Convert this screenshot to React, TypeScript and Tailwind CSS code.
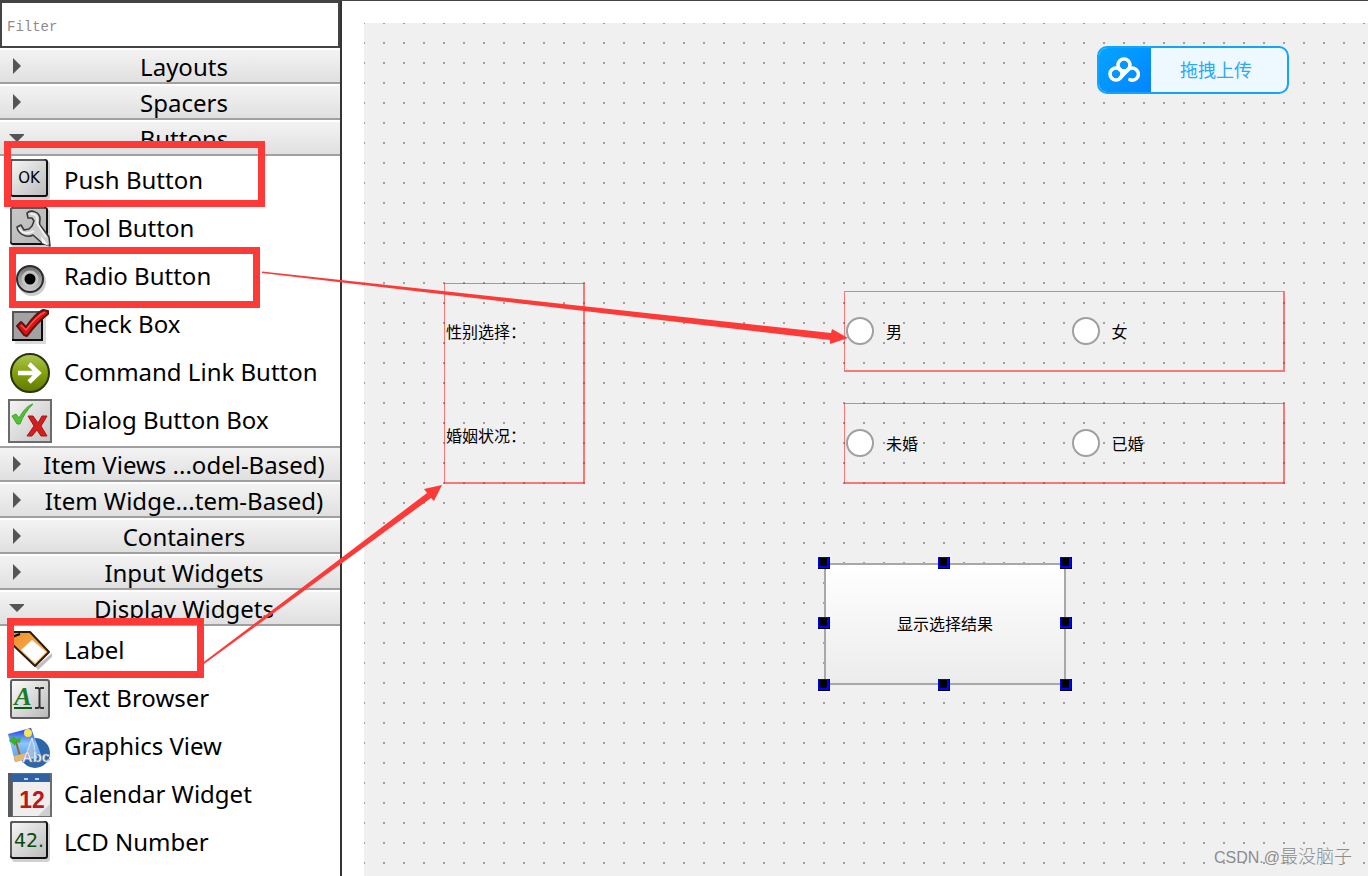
import type { ReactNode } from 'react';

function Keycap({ id, children }: { id: string; children: ReactNode }) {
  return (
    <>
      <defs>
        <linearGradient id={id} x1="0" y1="0" x2="1" y2="1">
          <stop offset="0" stopColor="#f4f4f4" />
          <stop offset="1" stopColor="#bdbdbd" />
        </linearGradient>
      </defs>
      <rect x="4" y="5" width="38" height="39" rx="3" fill="#000" opacity="0.18" />
      <rect x="2" y="3" width="38" height="38" rx="3" fill="#111" />
      <rect x="2" y="3" width="36" height="36" rx="3" fill="#5a5a5a" />
      <rect x="4" y="5" width="34" height="34" rx="1" fill={`url(#${id})`} />
      {children}
    </>
  );
}

const icons: Record<string, ReactNode> = {
  push: (
    <Keycap id="capPush">
      <text x="21" y="27" textAnchor="middle" fontFamily="DejaVu Sans" fontSize="15" fill="#000">OK</text>
    </Keycap>
  ),
  tool: (
    <Keycap id="capTool">
      <rect x="4" y="5" width="34" height="34" fill="#b4b4b4" opacity="0.7" />
      <path
        d="M19 9 C23 5 32 8 32 15 C32 18 31 19 32 21 L41 33 L42 42 L34 39 L25 31 C20 34 10 31 9 23 L13 21 L16 26 L21 25 L24 22 L26 17 L24 14 L20 14 Z"
        fill="#cfcfcf" stroke="#3a3a3a" strokeWidth="1.600" strokeLinejoin="round"
      />
      <path d="M22 10 C28 9 30 13 29 19 L38 33 M11 24 C14 30 20 30 26 27" fill="none" stroke="#f2f2f2" strokeWidth="1.600" />
      <path d="M33 32 L41 42 L34 39 Z" fill="#f5f5f5" />
    </Keycap>
  ),
  radio: (
    <>
      <defs>
        <linearGradient id="ring" x1="0" y1="0" x2="0" y2="1">
          <stop offset="0" stopColor="#6c6c6c" />
          <stop offset="1" stopColor="#cfcfcf" />
        </linearGradient>
      </defs>
      <circle cx="24" cy="30" r="14" fill="#000" opacity="0.2" />
      <circle cx="22" cy="27" r="13" fill="url(#ring)" stroke="#2c2c2c" strokeWidth="2" />
      <circle cx="22" cy="27" r="8.5" fill="#c4c4c4" />
      <circle cx="22" cy="27" r="5.5" fill="#000" />
    </>
  ),
  check: (
    <>
      <rect x="7" y="14" width="31" height="30" fill="#000" opacity="0.15" />
      <rect x="4" y="11" width="31" height="30" fill="#0c0c0c" />
      <rect x="4" y="11" width="29" height="28" fill="#555" />
      <rect x="6" y="13" width="27" height="26" fill="#a2a2a2" />
      <path d="M9 26 L13 22 L18 27 C23 20 29 13 35 10 L40 11 L40 14 C32 20 25 28 19 36 L16 35 Z" fill="#df1111" stroke="#5c1414" strokeWidth="2" strokeLinejoin="round" />
      <path d="M13 25 L18 30 C24 22 30 15 37 12" fill="none" stroke="#ff5148" strokeWidth="1.4" />
    </>
  ),
  command: (
    <>
      <defs>
        <linearGradient id="olive" x1="0" y1="0" x2="0" y2="1">
          <stop offset="0" stopColor="#adc653" />
          <stop offset="0.5" stopColor="#84a10c" />
          <stop offset="1" stopColor="#5f7a00" />
        </linearGradient>
      </defs>
      <circle cx="22" cy="25" r="19" fill="url(#olive)" stroke="#2c3310" strokeWidth="2" />
      <path d="M10 25 H30 M21 16 L30.500 25 L21 34" fill="none" stroke="#fff" strokeWidth="4.500" />
    </>
  ),
  dialog: (
    <>
      <defs>
        <linearGradient id="panel" x1="0" y1="0" x2="1" y2="1">
          <stop offset="0" stopColor="#f4f4f4" />
          <stop offset="1" stopColor="#c4c4c4" />
        </linearGradient>
      </defs>
      <rect x="1" y="4" width="42" height="42" fill="url(#panel)" stroke="#6b6b6b" strokeWidth="2" />
      <path d="M4 20 L8 18 L11 22 C15 15 19 10 25 8 C19 14 15 20 12 28 L9 28 Z" fill="#55c13a" stroke="#45a22d" strokeWidth="1" />
      <path d="M20 20 H25 L30 27 L34 20 H39 L33 30 L39 40 H33 L29 34 L24 40 H19 L26 30 Z" fill="#cf1f1f" stroke="#b01414" strokeWidth="1" />
    </>
  ),
  label: (
    <>
      <defs>
        <linearGradient id="tag" x1="0" y1="0" x2="1" y2="1">
          <stop offset="0" stopColor="#f08f24" />
          <stop offset="1" stopColor="#f6bd7c" />
        </linearGradient>
      </defs>
      <path d="M14 26 L30 44 L44 31 L44 27 L30 39 Z" fill="#000" opacity="0.25" />
      <path d="M4 6 H22 L41 26 L27 40 L5 19 Z" fill="url(#tag)" stroke="#2a1c0c" strokeWidth="2" strokeLinejoin="round" />
      <path d="M24 14 L38 26 L27 37 L13 24 Z" fill="#fff" />
      <path d="M4 11 L12 8" stroke="#000" strokeWidth="2" />
    </>
  ),
  text: (
    <>
      <defs>
        <linearGradient id="page" x1="0" y1="0" x2="1" y2="1">
          <stop offset="0" stopColor="#fdfdfd" />
          <stop offset="1" stopColor="#b8b8b8" />
        </linearGradient>
      </defs>
      <rect x="3" y="6" width="38" height="38" rx="2" fill="url(#page)" stroke="#5c5c5c" strokeWidth="2" />
      <text x="15" y="31" textAnchor="middle" fontFamily="Liberation Serif" fontStyle="italic" fontWeight="bold" fontSize="26" fill="#1d7a26">A</text>
      <path d="M6 34 H24" stroke="#0c5c16" strokeWidth="2" />
      <path d="M27 14 H30 L31.500 15 L33 14 H36 M31.500 15 V33 M27 34 H30 L31.500 33 L33 34 H36" fill="none" stroke="#333" strokeWidth="2" />
    </>
  ),
  graphics: (
    <>
      <defs>
        <linearGradient id="sky" x1="0" y1="0" x2="0" y2="1">
          <stop offset="0" stopColor="#1c35ea" />
          <stop offset="0.45" stopColor="#8cc6fa" />
          <stop offset="1" stopColor="#4a94ea" />
        </linearGradient>
      </defs>
      <circle cx="27" cy="31" r="15" fill="#2f66a8" />
      <path d="M0 12 L23 6 L33 33 L7 40 Z" fill="url(#sky)" />
      <circle cx="20" cy="11" r="4" fill="#f7e553" />
      <path d="M1 19 L5 14 L9 17 L13 15 L12 21 L8 20 L7 24 L4 21 Z" fill="#35b52a" />
      <path d="M8 20 L12 34" stroke="#8c6a33" strokeWidth="2" />
      <path d="M6 34 L18 31 L22 36 L7 40 Z" fill="#e7b56c" />
      <path d="M24 16 L29 36 L17 36 Z" fill="#9fbde2" stroke="#dfeaf7" strokeWidth="1" />
      <text x="28" y="40" textAnchor="middle" fontFamily="Liberation Sans" fontWeight="bold" fontSize="15" fill="#fff" stroke="#8193ab" strokeWidth="0.6">Abc</text>
    </>
  ),
  calendar: (
    <>
      <rect x="0" y="3" width="44" height="44" fill="#6d6d6d" />
      <rect x="5" y="12" width="37" height="34" fill="#eeeeee" />
      <path d="M42 34 V46 H30 Z" fill="#cfcfcf" />
      <rect x="4" y="4" width="38" height="8" fill="#2f62a5" />
      <rect x="0" y="3" width="4" height="44" fill="#56595e" />
      <path d="M16 9 H20 M27 9 H31" stroke="#bcd0ea" strokeWidth="2" />
      <text x="24" y="38" textAnchor="middle" fontFamily="Liberation Sans" fontWeight="bold" fontSize="23" fill="#bd1717">12</text>
    </>
  ),
  lcd: (
    <Keycap id="capLcd">
      <text x="21" y="29" textAnchor="middle" fontFamily="DejaVu Sans" fontSize="19" fill="#0a4a0a">42.</text>
    </Keycap>
  ),
};

type Item = { icon: string; name: string };
type Section = { title: string; items?: Item[] };

const sections: Section[] = [
  { title: 'Layouts' },
  { title: 'Spacers' },
  {
    title: 'Buttons',
    items: [
      { icon: 'push', name: 'Push Button' },
      { icon: 'tool', name: 'Tool Button' },
      { icon: 'radio', name: 'Radio Button' },
      { icon: 'check', name: 'Check Box' },
      { icon: 'command', name: 'Command Link Button' },
      { icon: 'dialog', name: 'Dialog Button Box' },
    ],
  },
  { title: 'Item Views ...odel-Based)' },
  { title: 'Item Widge...tem-Based)' },
  { title: 'Containers' },
  { title: 'Input Widgets' },
  {
    title: 'Display Widgets',
    items: [
      { icon: 'label', name: 'Label' },
      { icon: 'text', name: 'Text Browser' },
      { icon: 'graphics', name: 'Graphics View' },
      { icon: 'calendar', name: 'Calendar Widget' },
      { icon: 'lcd', name: 'LCD Number' },
    ],
  },
];

function SectionBlock({ section, afterOpen }: { section: Section; afterOpen: boolean }) {
  const open = Boolean(section.items);
  return (
    <section>
      <button
        type="button"
        aria-expanded={open}
        className={`flex h-9 w-full items-center border-y-2 border-b-[#a0a0a0] bg-linear-to-b from-[#f3f3f3] to-[#e0e0e0] bg-clip-padding ${afterOpen ? 'border-t-[#a0a0a0]' : 'border-t-white'}`}
      >
        <svg className="ml-2 h-4 w-4 shrink-0" viewBox="0 0 16 16" aria-hidden="true">
          {open ? <path d="M1 4 H17 L9 12 Z" fill="#555" /> : <path d="M5 0 L13 8 L5 16 Z" fill="#555" />}
        </svg>
        <span className="flex-1 pt-0.5 pl-1 text-center leading-8 whitespace-nowrap">{section.title}</span>
      </button>
      {section.items && (
        <ul className="pb-0.5">
          {section.items.map((item) => (
            <li key={item.name}>
              <button type="button" className="flex h-12 w-full items-center gap-3 pl-2">
                <svg className="h-12 w-11 shrink-0" viewBox="0 0 44 48" aria-hidden="true">
                  {icons[item.icon]}
                </svg>
                <span className="whitespace-nowrap">{item.name}</span>
              </button>
            </li>
          ))}
        </ul>
      )}
    </section>
  );
}

function Choice({ group, text }: { group: string; text: string }) {
  return (
    <label className="flex flex-1 items-center gap-3">
      <input type="radio" name={group} className="size-7 appearance-none rounded-full border-2 border-[#a0a0a0] bg-white checked:bg-[#333]" />
      {text}
    </label>
  );
}

const frame = 'absolute border border-r-2 border-b-2 border-[#ff0000]/50';

const handles = [
  '-top-2 -left-2',
  '-top-2 left-28',
  '-top-2 -right-2',
  'top-13 -left-2',
  'top-13 -right-2',
  '-bottom-2 -left-2',
  '-bottom-2 left-28',
  '-bottom-2 -right-2',
];

export default function App() {
  return (
    <div className="relative flex min-h-screen overflow-hidden border-t border-[#444] bg-white font-['Noto_Sans','Noto_Sans_CJK_SC',sans-serif] text-black">
      <aside className="-mt-px w-[342px] shrink-0 border-r-2 border-[#333] text-2xl">
        <input
          type="text"
          aria-label="Filter"
          placeholder="Filter"
          className="block h-12 w-full border-2 border-t-3 border-[#444] bg-white px-[5px] pt-1 font-['Liberation_Mono',monospace] text-sm outline-none placeholder:text-[#8c8c8c]"
        />
        {sections.map((section, i) => (
          <SectionBlock key={section.title} section={section} afterOpen={i > 0 && Boolean(sections[i - 1].items)} />
        ))}
      </aside>

      <main className="flex min-w-0 flex-1 pt-[22px] pl-[22px]">
        <div className="relative flex-1 bg-[#f0f0f0] bg-[conic-gradient(from_270deg_at_2px_2px,#a0a0a0_90deg,transparent_0)] bg-size-[20px_20px] bg-position-[-1px_-1px] font-['Noto_Sans_CJK_SC',sans-serif] text-base">
          <button
            type="button"
            className="absolute top-[23px] left-[733px] flex h-12 w-48 overflow-hidden rounded-[10px] border-2 border-[#12a5fb] bg-[#edf8ff] text-lg text-[#2aa9f5]"
          >
            <span className="-m-0.5 flex w-[54px] items-center justify-center bg-linear-to-br from-[#08a6ff] to-[#0683ff]">
              <svg className="h-7 w-8" viewBox="0 0 32 28" fill="none" stroke="#fff" strokeWidth="3.600" strokeLinecap="round" aria-hidden="true">
                <circle cx="16" cy="9" r="6" />
                <circle cx="8" cy="18" r="6" />
                <path d="M12 22 L20 14 A6 6 0 1 1 22 23.700" />
              </svg>
            </span>
            <span className="flex flex-1 items-center justify-center self-center pr-1 pb-0.5">拖拽上传</span>
          </button>

          <div className={`${frame} top-[260px] left-20 flex h-[201px] w-[141px] flex-col justify-between py-[35px] pl-px`}>
            <p>性别选择：</p>
            <p>婚姻状况：</p>
          </div>

          <div className={`${frame} top-[268px] left-[480px] flex h-[81px] w-[441px] gap-3.5 pl-px`}>
            <Choice group="sex" text="男" />
            <Choice group="sex" text="女" />
          </div>

          <div className={`${frame} top-[380px] left-[480px] flex h-[81px] w-[441px] gap-3.5 pl-px`}>
            <Choice group="marriage" text="未婚" />
            <Choice group="marriage" text="已婚" />
          </div>

          <div className="absolute top-[540px] left-[460px] h-[122px] w-[242px]">
            <button type="button" className="h-full w-full border-2 border-[#a8a8a8] bg-[#f6f6f6] bg-linear-to-b from-white to-[#ececec] pb-0.5">
              显示选择结果
            </button>
            {handles.map((place) => (
              <span key={place} className={`absolute ${place} m-0.5 size-3 bg-black pr-px pb-px`}>
                <span className="block h-full w-full border border-r-2 border-b-2 border-[#0000ff] bg-black" />
              </span>
            ))}
          </div>

          <p className="absolute right-4 bottom-1 flex items-baseline font-['Liberation_Sans','Noto_Sans_CJK_SC',sans-serif] text-base leading-7 text-[#8c8c8c]">
            CSDN.@<span className="text-lg font-light">最没脑子</span>
          </p>
        </div>
      </main>

      <div className="pointer-events-none absolute top-[140px] left-1 h-[66px] w-[261px] border-7 border-[#fd3a38]" />
      <div className="pointer-events-none absolute top-[246px] left-[9px] h-[61px] w-[251px] border-7 border-[#fd3a38]" />
      <div className="pointer-events-none absolute top-[617px] left-[7px] h-[60px] w-[197px] border-7 border-[#fd3a38]" />
      <svg className="pointer-events-none absolute -top-px left-0" width="860" height="700" viewBox="0 0 860 700" fill="#fd3a38" aria-hidden="true">
        <path d="M262 271.500 L831 333 L832 329 L848 338 L830 344 L830 340 L262 273 Z" />
        <path d="M203 662.500 L427 493 L424 489 L442 485 L434 501 L431 498 L204 664 Z" />
      </svg>
    </div>
  );
}
